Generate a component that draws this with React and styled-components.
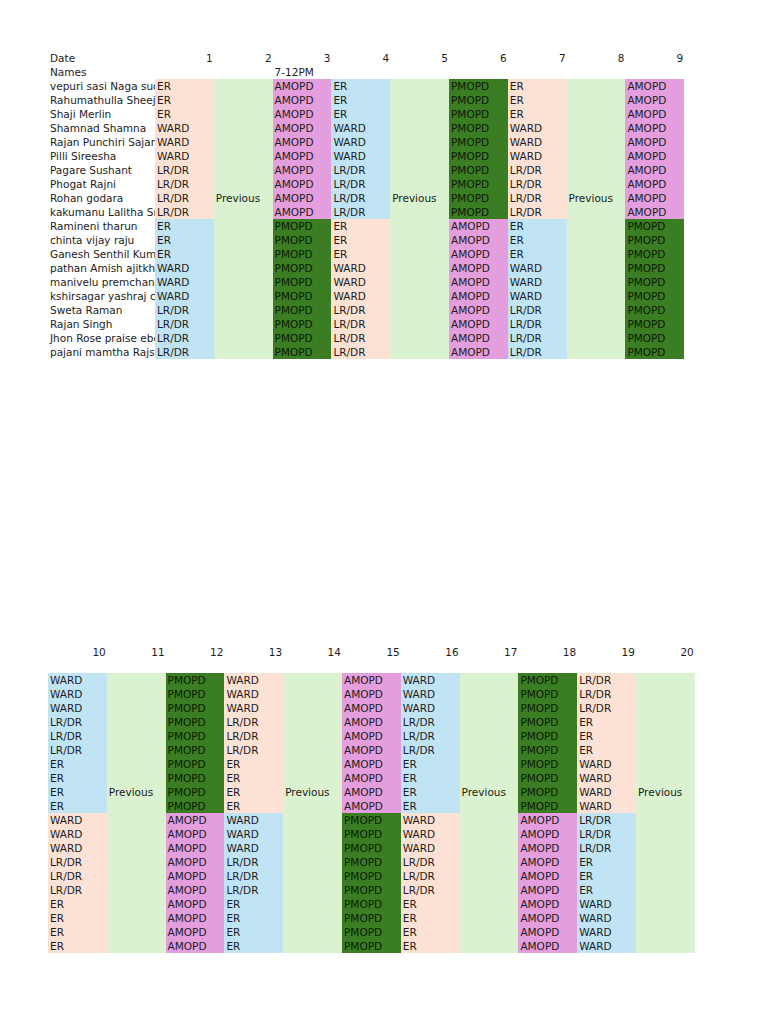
import React from "react";
import styled, { createGlobalStyle } from "styled-components";

const GlobalStyle = createGlobalStyle`
  body {
    margin: 0;
    background: #ffffff;
    font-family: "DejaVu Sans", "Liberation Sans", sans-serif;
  }
`;

const colors = {
  peach: "#fbe2d5",
  blue: "#c1e4f5",
  green: "#daf2d0",
  pink: "#e49edd",
  dark: "#3b7d23",
};

const names = [
  "vepuri sasi Naga sudha",
  "Rahumathulla Sheeja",
  "Shaji Merlin",
  "Shamnad Shamna",
  "Rajan Punchiri Sajana",
  "Pilli Sireesha",
  "Pagare Sushant",
  "Phogat Rajni",
  "Rohan godara",
  "kakumanu Lalitha Sri",
  "Ramineni tharun",
  "chinta vijay raju",
  "Ganesh Senthil Kumar",
  "pathan Amish ajitkhan",
  "manivelu premchand",
  "kshirsagar yashraj c",
  "Sweta Raman",
  "Rajan Singh",
  "Jhon Rose praise eben",
  "pajani mamtha Rajsekar",
];

const rep = (label, n) => Array(n).fill(label);
const half = (pattern) => [...pattern, ...pattern];

const ewl = [...rep("ER", 3), ...rep("WARD", 3), ...rep("LR/DR", 4)];
const wle = [...rep("WARD", 3), ...rep("LR/DR", 3), ...rep("ER", 4)];
const lew = [...rep("LR/DR", 3), ...rep("ER", 3), ...rep("WARD", 4)];

// each duty column: labels for 20 rows, colour of first 10 rows and last 10
const duty = (pattern, top, bottom) => ({
  labels: half(pattern),
  fill: [...rep(top, 10), ...rep(bottom, 10)],
});
const opd = (top, bottom) => ({
  labels: [...rep(top, 10), ...rep(bottom, 10)],
  fill: [
    ...rep(top === "AMOPD" ? "pink" : "dark", 10),
    ...rep(bottom === "AMOPD" ? "pink" : "dark", 10),
  ],
});
const previous = () => ({
  labels: rep("", 20).map((v, i) => (i === 8 ? "Previous" : "")),
  fill: rep("green", 20),
});

const firstDays = [
  duty(ewl, "peach", "blue"),
  previous(),
  opd("AMOPD", "PMOPD"),
  duty(ewl, "blue", "peach"),
  previous(),
  opd("PMOPD", "AMOPD"),
  duty(ewl, "peach", "blue"),
  previous(),
  opd("AMOPD", "PMOPD"),
];

const secondDays = [
  duty(wle, "blue", "peach"),
  previous(),
  opd("PMOPD", "AMOPD"),
  duty(wle, "peach", "blue"),
  previous(),
  opd("AMOPD", "PMOPD"),
  duty(wle, "blue", "peach"),
  previous(),
  opd("PMOPD", "AMOPD"),
  duty(lew, "peach", "blue"),
  previous(),
];

const Page = styled.div`
  padding: 51px 0 0 48px;
  color: #1c1c1c;
  font-size: 10.5px;
`;

const Sheet = styled.div`
  display: grid;
  grid-template-columns: ${(p) => p.$cols};
  grid-auto-rows: 14px;
  margin-bottom: ${(p) => p.$gap || 0}px;
`;

const Cell = styled.div`
  line-height: 14px;
  white-space: nowrap;
  overflow: hidden;
  text-overflow: clip;
  text-align: ${(p) => (p.$right ? "right" : "left")};
  padding: ${(p) => (p.$right ? "0 1px 0 2px" : "0 0 0 2px")};
  background: ${(p) => (p.$fill ? colors[p.$fill] : "transparent")};
  color: ${(p) => (p.$fill === "dark" ? "#0b1a05" : "inherit")};
`;

const Schedule = ({ days, start, withNames, gap }) => {
  const cols = withNames
    ? `107px repeat(${days.length}, 58.8px)`
    : `repeat(${days.length}, 58.8px)`;
  return (
    <Sheet $cols={cols} $gap={gap}>
      {withNames && <Cell>Date</Cell>}
      {days.map((d, i) => (
        <Cell key={`h${i}`} $right>
          {start + i}
        </Cell>
      ))}
      {withNames && <Cell>Names</Cell>}
      {days.map((d, i) => (
        <Cell key={`s${i}`}>{withNames && i === 2 ? "7-12PM" : ""}</Cell>
      ))}
      {names.map((name, r) => (
        <React.Fragment key={name}>
          {withNames && <Cell>{name}</Cell>}
          {days.map((d, i) => (
            <Cell key={i} $fill={d.fill[r]}>
              {d.labels[r]}
            </Cell>
          ))}
        </React.Fragment>
      ))}
    </Sheet>
  );
};

export default function App() {
  return (
    <>
      <GlobalStyle />
      <Page>
        <Schedule days={firstDays} start={1} withNames gap={286} />
        <Schedule days={secondDays} start={10} />
      </Page>
    </>
  );
}
